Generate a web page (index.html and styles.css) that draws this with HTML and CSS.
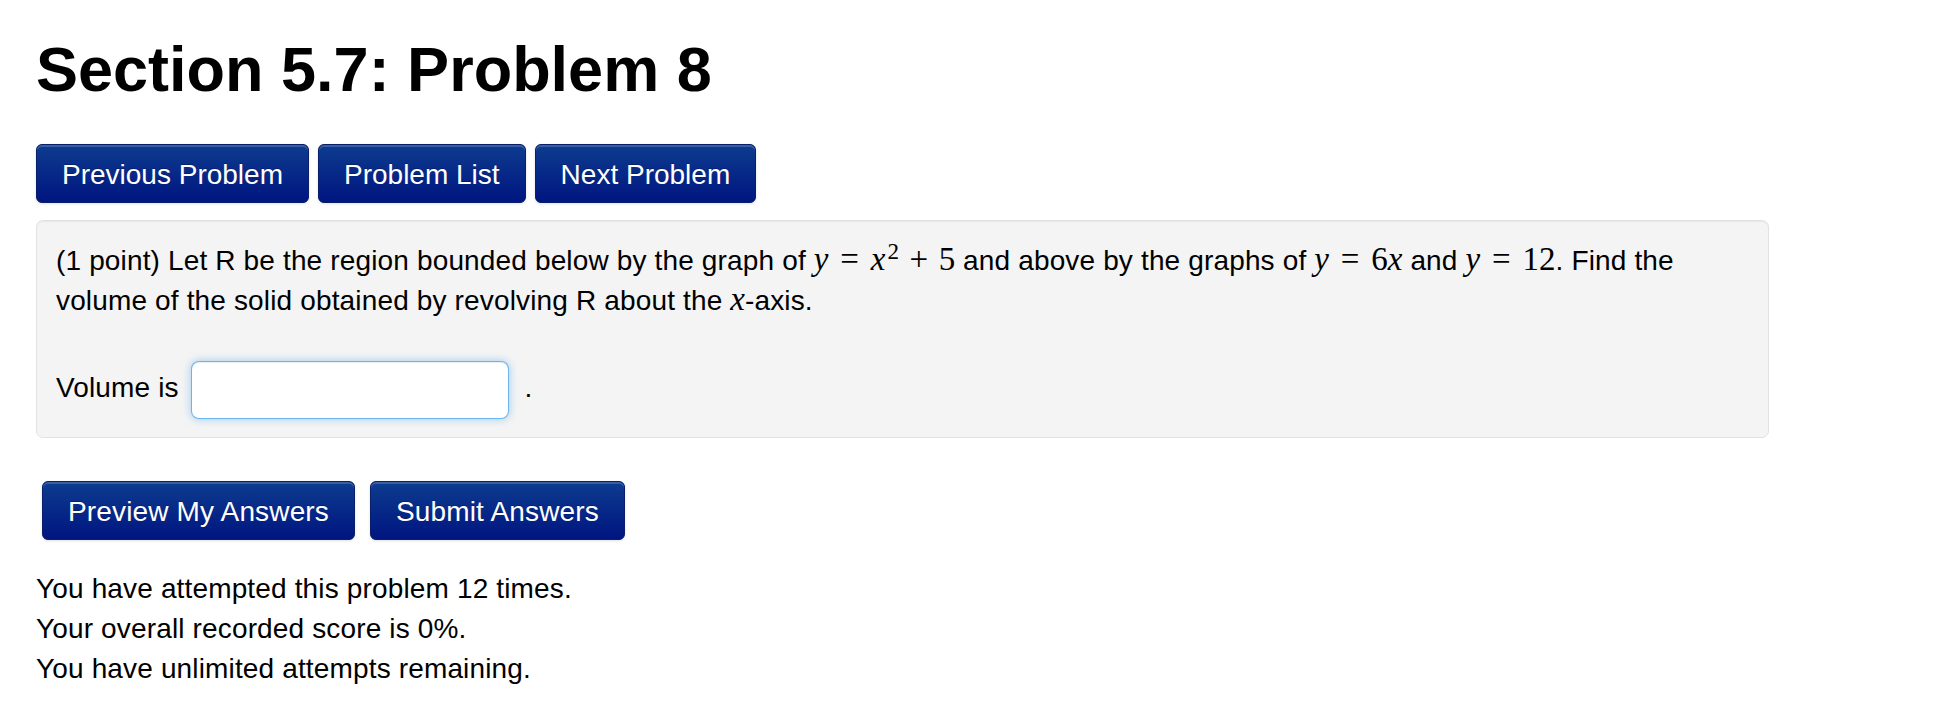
FILE: index.html
```html
<!DOCTYPE html>
<html lang="en">
<head>
<meta charset="utf-8">
<title>Section 5.7: Problem 8</title>
<link rel="stylesheet" href="styles.css">
</head>
<body>
<div class="page">
  <h1 class="title">Section 5.7: Problem 8</h1>

  <div class="nav">
    <a class="btn" href="#">Previous Problem</a>
    <a class="btn" href="#">Problem List</a>
    <a class="btn" href="#">Next Problem</a>
  </div>

  <div class="well">
    <p class="question">(1 point) Let R be the region bounded below by the graph of <span class="math"><i>y</i><span class="rel">=</span><i>x</i><span class="sup">2</span><span class="bin">+</span>5</span> and above by the graphs of <span class="math"><i>y</i><span class="rel">=</span>6<i>x</i></span> and <span class="math"><i>y</i><span class="rel">=</span>12</span>. Find the volume of the solid obtained by revolving R about the <span class="math"><i>x</i></span>-axis.</p>
    <p class="answer">Volume is <input class="field" type="text" aria-label="Volume"> .</p>
  </div>

  <div class="submit-row">
    <button class="btn btn-wide" type="button">Preview My Answers</button>
    <button class="btn btn-wide" type="button">Submit Answers</button>
  </div>

  <div class="status">
    <div>You have attempted this problem 12 times.</div>
    <div>Your overall recorded score is 0%.</div>
    <div>You have unlimited attempts remaining.</div>
  </div>
</div>
</body>
</html>
```

FILE: styles.css
```css
html, body {
  margin: 0;
  padding: 0;
  background: #ffffff;
}

body {
  font-family: "Liberation Sans", Arial, Helvetica, sans-serif;
  font-size: 28px;
  line-height: 40px;
  letter-spacing: 0.15px;
  color: #000000;
}

.page {
  padding: 0 0 40px 36px;
}

.title {
  margin: 35px 0 0 0;
  font-size: 63px;
  line-height: 69px;
  font-weight: bold;
  letter-spacing: 0;
  color: #000000;
}

.nav {
  display: flex;
  gap: 9px;
  margin-top: 40px;
}

.btn {
  display: inline-block;
  box-sizing: border-box;
  height: 59px;
  padding: 10px 25px 8px;
  font-family: "Liberation Sans", Arial, Helvetica, sans-serif;
  font-size: 28px;
  line-height: 39px;
  letter-spacing: 0;
  color: #ffffff;
  text-decoration: none;
  text-shadow: 0 -1px 0 rgba(0, 0, 0, 0.25);
  background-color: #01207f;
  background-image: linear-gradient(to bottom, #0d3c8f 0%, #001580 100%);
  border: 1px solid #0a1f6c;
  border-radius: 6px;
  box-shadow: inset 0 2px 0 rgba(255, 255, 255, 0.18), 0 1px 3px rgba(0, 0, 0, 0.12);
  cursor: pointer;
  white-space: nowrap;
}

.btn-wide {
  letter-spacing: 0.15px;
}

.well {
  box-sizing: border-box;
  width: 1733px;
  margin-top: 17px;
  padding: 20px 19px 18px;
  background: #f4f4f4;
  border: 1px solid #e2e2e2;
  border-radius: 7px;
  box-shadow: inset 0 1px 1px rgba(0, 0, 0, 0.05);
}

.question {
  margin: 0 0 40px 0;
}

.answer {
  margin: 0;
}

.math {
  font-family: "Liberation Serif", "Times New Roman", serif;
  font-size: 33px;
  line-height: 1;
  letter-spacing: 0;
  white-space: nowrap;
}

.math i {
  font-style: italic;
}

.rel {
  margin: 0 0.36em;
}

.bin {
  margin: 0 0.32em;
}

.sup {
  font-size: 23px;
  line-height: 0;
  vertical-align: 0.48em;
  margin-left: 2px;
}

.field {
  box-sizing: border-box;
  width: 318px;
  height: 58px;
  margin: 0 8px 0 4px;
  padding: 4px 12px;
  vertical-align: middle;
  font-family: "Liberation Sans", Arial, sans-serif;
  font-size: 28px;
  background: #ffffff;
  border: 1px solid rgba(82, 168, 236, 0.85);
  border-radius: 8px;
  outline: none;
  box-shadow: inset 0 1px 1px rgba(0, 0, 0, 0.075), 0 0 8px rgba(82, 168, 236, 0.55);
}

.submit-row {
  display: flex;
  gap: 15px;
  margin-top: 43px;
  padding-left: 6px;
}

.status {
  margin-top: 29px;
}
```
